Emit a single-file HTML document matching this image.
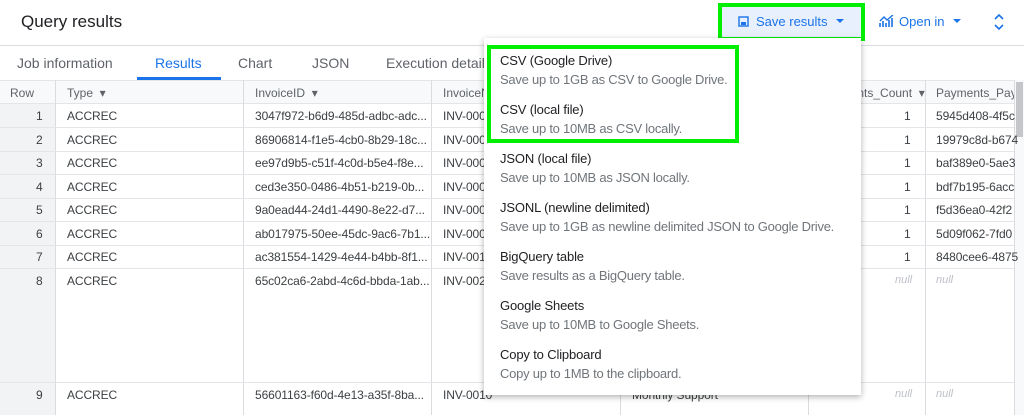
<!DOCTYPE html>
<html><head><meta charset="utf-8"><style>
*{box-sizing:border-box;margin:0;padding:0}
body{width:1024px;height:415px;overflow:hidden;background:#fff;font-family:"Liberation Sans",Arial,sans-serif;color:#3c4043;position:relative}
.a{position:absolute;white-space:nowrap}
.t{font-size:12px;color:#3c4043;letter-spacing:-0.1px}
.h{font-size:12px;color:#5f6368}
.vl{position:absolute;width:1px;background:#dadce0}
.hl{position:absolute;height:1px;background:#e3e5e8}
.mt{font-size:13px;color:#202124;position:absolute;left:500px;letter-spacing:-0.15px}
.ms{font-size:13px;color:#70757a;position:absolute;left:500px;letter-spacing:-0.25px}
.null{font-style:italic;color:#bdc1c6;font-size:11px}
</style></head><body>
<div class="a" style="left:21px;top:12px;font-size:17px;color:#202124">Query results</div>
<div class="hl" style="left:0;top:45px;width:1024px;background:#dadce0"></div>
<div class="a" style="left:17px;top:55px;font-size:14px;color:#5f6368">Job information</div>
<div class="a" style="left:155px;top:55px;font-size:14px;color:#1a73e8">Results</div>
<div style="position:absolute;left:137px;top:77px;width:84px;height:3px;background:#1a73e8"></div>
<div class="a" style="left:238px;top:55px;font-size:14px;color:#5f6368">Chart</div>
<div class="a" style="left:312px;top:55px;font-size:14px;color:#5f6368">JSON</div>
<div class="a" style="left:386px;top:55px;font-size:14px;color:#5f6368">Execution details</div>
<div style="position:absolute;left:718px;top:3px;width:147px;height:38px;border:4px solid #00ee00;"></div>
<div style="position:absolute;left:722px;top:7px;width:139px;height:30px;background:#e8f0fe"></div>
<svg class="a" style="left:738px;top:16px" width="11" height="11" viewBox="0 0 11 11"><rect x="1" y="1" width="9" height="9" fill="none" stroke="#1a73e8" stroke-width="1.4"/><rect x="3" y="6" width="5" height="3" fill="#1a73e8"/></svg>
<div class="a" style="left:756px;top:14px;font-size:13px;color:#1a73e8">Save results</div>
<svg class="a" style="left:836px;top:19px" width="8" height="5"><path d="M0 0L8 0L4 4Z" fill="#1a73e8"/></svg>
<svg class="a" style="left:879px;top:15px" width="15" height="13" viewBox="0 0 15 13"><path d="M1 12V8M4 12V6M7 12V8M10 12V5M13 12V3" stroke="#1a73e8" stroke-width="1.6"/><path d="M1 6L5 2L8 5L14 0" stroke="#1a73e8" stroke-width="1.4" fill="none"/></svg>
<div class="a" style="left:899px;top:14px;font-size:13px;color:#1a73e8">Open in</div>
<svg class="a" style="left:953px;top:19px" width="8" height="5"><path d="M0 0L8 0L4 4Z" fill="#1a73e8"/></svg>
<svg class="a" style="left:994px;top:14px" width="10" height="16"><path d="M1 5L5 1L9 5M1 11L5 15L9 11" stroke="#1a73e8" stroke-width="1.6" fill="none"/></svg>
<div style="position:absolute;left:0;top:80px;width:1014px;height:24px;background:#f8f9fa;border-top:1px solid #e3e5e8;border-bottom:1px solid #e3e5e8"></div>
<div style="position:absolute;left:0;top:104px;width:55px;height:311px;background:#f1f3f4"></div>
<div class="a h" style="left:10px;top:86px">Row</div>
<div class="a h" style="left:67px;top:86px">Type &nbsp;▾</div>
<div class="a h" style="left:255px;top:86px">InvoiceID &nbsp;▾</div>
<div class="a h" style="left:443px;top:86px">InvoiceNumber</div>
<div class="a h" style="left:820px;top:86px">Payments_Count &nbsp;▾</div>
<div class="a h" style="left:936px;top:86px;width:78px;overflow:hidden">Payments_PaymentID</div>
<div class="vl" style="left:55px;top:80px;height:335px"></div>
<div class="vl" style="left:243px;top:80px;height:335px"></div>
<div class="vl" style="left:431px;top:80px;height:335px"></div>
<div class="vl" style="left:620px;top:80px;height:335px"></div>
<div class="vl" style="left:808px;top:80px;height:335px"></div>
<div class="vl" style="left:925px;top:80px;height:335px"></div>
<div class="vl" style="left:1014px;top:80px;height:335px"></div>
<div style="position:absolute;left:1015px;top:80px;width:9px;height:335px;background:#f8f9fa"></div>
<div style="position:absolute;left:1016px;top:82px;width:7px;height:55px;background:#c4c6c9"></div>
<div class="hl" style="left:0;top:127px;width:1014px"></div>
<div class="hl" style="left:0;top:151px;width:1014px"></div>
<div class="hl" style="left:0;top:174px;width:1014px"></div>
<div class="hl" style="left:0;top:198px;width:1014px"></div>
<div class="hl" style="left:0;top:221px;width:1014px"></div>
<div class="hl" style="left:0;top:245px;width:1014px"></div>
<div class="hl" style="left:0;top:268px;width:1014px"></div>
<div class="hl" style="left:0;top:382px;width:1014px"></div>

<div class="a t" style="left:36px;top:109px">1</div><div class="a t" style="left:67px;top:109px">ACCREC</div><div class="a t" style="left:255px;top:109px">3047f972-b6d9-485d-adbc-adc...</div><div class="a t" style="left:443px;top:109px">INV-0001</div><div class="a t" style="left:904px;top:109px">1</div><div class="a t" style="left:936px;top:109px">5945d408-4f5c</div>
<div class="a t" style="left:36px;top:133px">2</div><div class="a t" style="left:67px;top:133px">ACCREC</div><div class="a t" style="left:255px;top:133px">86906814-f1e5-4cb0-8b29-18c...</div><div class="a t" style="left:443px;top:133px">INV-0002</div><div class="a t" style="left:904px;top:133px">1</div><div class="a t" style="left:936px;top:133px">19979c8d-b674</div>
<div class="a t" style="left:36px;top:156px">3</div><div class="a t" style="left:67px;top:156px">ACCREC</div><div class="a t" style="left:255px;top:156px">ee97d9b5-c51f-4c0d-b5e4-f8e...</div><div class="a t" style="left:443px;top:156px">INV-0003</div><div class="a t" style="left:904px;top:156px">1</div><div class="a t" style="left:936px;top:156px">baf389e0-5ae3</div>
<div class="a t" style="left:36px;top:180px">4</div><div class="a t" style="left:67px;top:180px">ACCREC</div><div class="a t" style="left:255px;top:180px">ced3e350-0486-4b51-b219-0b...</div><div class="a t" style="left:443px;top:180px">INV-0005</div><div class="a t" style="left:904px;top:180px">1</div><div class="a t" style="left:936px;top:180px">bdf7b195-6acc</div>
<div class="a t" style="left:36px;top:203px">5</div><div class="a t" style="left:67px;top:203px">ACCREC</div><div class="a t" style="left:255px;top:203px">9a0ead44-24d1-4490-8e22-d7...</div><div class="a t" style="left:443px;top:203px">INV-0006</div><div class="a t" style="left:904px;top:203px">1</div><div class="a t" style="left:936px;top:203px">f5d36ea0-42f2</div>
<div class="a t" style="left:36px;top:227px">6</div><div class="a t" style="left:67px;top:227px">ACCREC</div><div class="a t" style="left:255px;top:227px">ab017975-50ee-45dc-9ac6-7b1...</div><div class="a t" style="left:443px;top:227px">INV-0008</div><div class="a t" style="left:904px;top:227px">1</div><div class="a t" style="left:936px;top:227px">5d09f062-7fd0</div>
<div class="a t" style="left:36px;top:250px">7</div><div class="a t" style="left:67px;top:250px">ACCREC</div><div class="a t" style="left:255px;top:250px">ac381554-1429-4e44-b4bb-8f1...</div><div class="a t" style="left:443px;top:250px">INV-0010</div><div class="a t" style="left:904px;top:250px">1</div><div class="a t" style="left:936px;top:250px">8480cee6-4875</div>
<div class="a t" style="left:36px;top:274px">8</div><div class="a t" style="left:67px;top:274px">ACCREC</div><div class="a t" style="left:255px;top:274px">65c02ca6-2abd-4c6d-bbda-1ab...</div><div class="a t" style="left:443px;top:274px">INV-0021</div><div class="a null" style="left:895px;top:274px">null</div><div class="a null" style="left:936px;top:274px">null</div>
<div class="a t" style="left:36px;top:388px">9</div><div class="a t" style="left:67px;top:388px">ACCREC</div><div class="a t" style="left:255px;top:388px">56601163-f60d-4e13-a35f-8ba...</div><div class="a t" style="left:443px;top:388px">INV-0010</div><div class="a t" style="left:632px;top:388px">Monthly Support</div><div class="a null" style="left:895px;top:388px">null</div><div class="a null" style="left:936px;top:388px">null</div>

<div style="position:absolute;left:484px;top:38px;width:377px;height:357px;background:#fff;box-shadow:0 2px 6px rgba(0,0,0,.3)"></div>
<div style="position:absolute;left:487px;top:45px;width:252px;height:98px;border:4px solid #00ee00"></div>
<div class="mt" style="top:53px">CSV (Google Drive)</div>
<div class="ms" style="top:72px">Save up to 1GB as CSV to Google Drive.</div>
<div class="mt" style="top:102px">CSV (local file)</div>
<div class="ms" style="top:121px">Save up to 10MB as CSV locally.</div>
<div class="mt" style="top:151px">JSON (local file)</div>
<div class="ms" style="top:170px">Save up to 10MB as JSON locally.</div>
<div class="mt" style="top:200px">JSONL (newline delimited)</div>
<div class="ms" style="top:219px">Save up to 1GB as newline delimited JSON to Google Drive.</div>
<div class="mt" style="top:249px">BigQuery table</div>
<div class="ms" style="top:268px">Save results as a BigQuery table.</div>
<div class="mt" style="top:298px">Google Sheets</div>
<div class="ms" style="top:317px">Save up to 10MB to Google Sheets.</div>
<div class="mt" style="top:347px">Copy to Clipboard</div>
<div class="ms" style="top:366px">Copy up to 1MB to the clipboard.</div>
</body></html>
